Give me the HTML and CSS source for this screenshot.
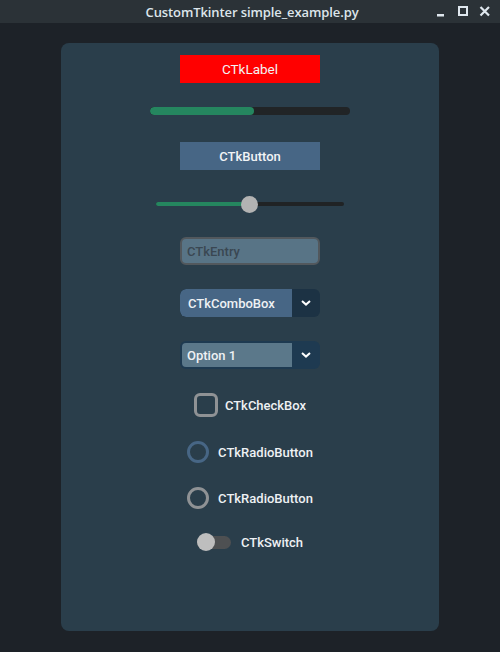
FILE: index.html
```html
<!DOCTYPE html>
<html>
<head>
<meta charset="utf-8">
<link rel="stylesheet" href="styles.css">
</head>
<body>
<div class="window">
  <div class="titlebar">
    <div class="title">CustomTkinter simple_example.py</div>
    <div class="controls">
      <svg class="ctl" width="12" height="12" viewBox="0 0 12 12"><rect x="2" y="8" width="7" height="2.5" fill="#dfe7ee"/></svg>
      <svg class="ctl" width="12" height="12" viewBox="0 0 12 12"><rect x="2" y="1" width="8" height="8" fill="none" stroke="#dfe7ee" stroke-width="2"/></svg>
      <svg class="ctl" width="12" height="12" viewBox="0 0 12 12"><path d="M1.5 1 L10 9.5 M10 1 L1.5 9.5" stroke="#dfe7ee" stroke-width="2.2"/></svg>
    </div>
  </div>
  <div class="content">
    <div class="frame">
      <div class="label">CTkLabel</div>
      <div class="progress"><div class="progress-fill"></div></div>
      <div class="button">CTkButton</div>
      <div class="slider">
        <div class="slider-track"><div class="slider-fill"></div></div>
        <div class="slider-knob"></div>
      </div>
      <div class="entry">CTkEntry</div>
      <div class="combo">
        <div class="combo-text">CTkComboBox</div>
        <div class="combo-btn">
          <svg width="10" height="6" viewBox="0 0 10 6"><path d="M1 1 L5 4.6 L9 1" fill="none" stroke="#ffffff" stroke-width="2"/></svg>
        </div>
      </div>
      <div class="option">
        <div class="option-text">Option 1</div>
        <div class="option-btn">
          <svg width="10" height="6" viewBox="0 0 10 6"><path d="M1 1 L5 4.6 L9 1" fill="none" stroke="#ffffff" stroke-width="2"/></svg>
        </div>
      </div>
      <div class="row check-row">
        <div class="checkbox"></div>
        <span class="row-text">CTkCheckBox</span>
      </div>
      <div class="row radio-row">
        <div class="radio radio-blue"></div>
        <span class="row-text">CTkRadioButton</span>
      </div>
      <div class="row radio-row">
        <div class="radio radio-gray"></div>
        <span class="row-text">CTkRadioButton</span>
      </div>
      <div class="row switch-row">
        <div class="switch"><div class="switch-knob"></div></div>
        <span class="row-text">CTkSwitch</span>
      </div>
    </div>
  </div>
</div>
</body>
</html>
```
FILE: styles.css
```css
html, body {
  margin: 0;
  padding: 0;
  width: 500px;
  height: 652px;
  overflow: hidden;
  background: #1d2228;
}
.window {
  display: flex;
  flex-direction: column;
  width: 500px;
  height: 652px;
}
.titlebar {
  height: 23px;
  background: #2b3237;
  display: flex;
  align-items: center;
  justify-content: center;
  position: relative;
  flex: none;
}
.title {
  font-family: "Open Sans", "DejaVu Sans", sans-serif;
  font-weight: 600;
  font-size: 13px;
  color: #dde5eb;
  margin-left: 4px;
  letter-spacing: -0.1px;
}
.controls {
  position: absolute;
  right: 9px;
  top: 6px;
  display: flex;
  gap: 10px;
}
.ctl { display: block; }
.content {
  flex: 1;
  padding: 20px 61px 21px 61px;
}
.frame {
  height: 588px;
  background: #2a3e4b;
  border-radius: 8px;
  display: flex;
  flex-direction: column;
  align-items: center;
  padding-top: 12px;
  box-sizing: border-box;
  font-family: Roboto, "Liberation Sans", sans-serif;
  font-weight: 500;
  font-size: 13px;
  color: #eef1f4;
}
.label {
  width: 140px;
  height: 28px;
  background: #ff0000;
  color: #f4f4f4;
  display: flex;
  align-items: center;
  justify-content: center;
  font-weight: 400;
  font-size: 13.5px;
}
.progress {
  margin-top: 24px;
  width: 200px;
  height: 8px;
  border-radius: 4px;
  background: #212426;
  overflow: hidden;
}
.progress-fill {
  width: 104px;
  height: 100%;
  background: #25865f;
  border-radius: 4px;
}
.button {
  margin-top: 27px;
  width: 140px;
  height: 28px;
  background: #476685;
  display: flex;
  align-items: center;
  justify-content: center;
  color: #f2f4f6;
}
.slider {
  margin-top: 25px;
  width: 188px;
  height: 18px;
  position: relative;
  display: flex;
  align-items: center;
}
.slider-track {
  width: 188px;
  height: 4px;
  border-radius: 2px;
  background: #202325;
  overflow: hidden;
}
.slider-fill {
  width: 94px;
  height: 100%;
  background: #25865f;
}
.slider-knob {
  position: absolute;
  left: 85px;
  top: 1px;
  width: 17px;
  height: 17px;
  border-radius: 50%;
  background: #b3b3b3;
}
.entry {
  margin-top: 24px;
  width: 140px;
  height: 28px;
  box-sizing: border-box;
  border: 2px solid #52585d;
  border-radius: 6px;
  background: #587486;
  color: #3a4752;
  display: flex;
  align-items: center;
  padding-left: 5px;
}
.combo {
  margin-top: 24px;
  width: 140px;
  height: 28px;
  border-radius: 6px;
  background: #1c3244;
  display: flex;
  overflow: hidden;
}
.combo-text {
  width: 112px;
  background: #476685;
  display: flex;
  align-items: center;
  padding-left: 8px;
  box-sizing: border-box;
  border-radius: 6px 0 0 6px;
}
.combo-btn, .option-btn {
  flex: 1;
  display: flex;
  align-items: center;
  justify-content: center;
}
.combo-btn svg, .option-btn svg { display: block; }
.option {
  margin-top: 24px;
  width: 140px;
  height: 28px;
  border-radius: 6px;
  background: #1e3a51;
  display: flex;
  box-sizing: border-box;
  padding: 2px 0 2px 2px;
}
.option-text {
  width: 110px;
  background: #5b788a;
  display: flex;
  align-items: center;
  padding-left: 5px;
  box-sizing: border-box;
  border-radius: 4px 0 0 4px;
}
.row {
  margin-top: 24px;
  display: flex;
  align-items: center;
}
.check-row { height: 24px; gap: 7px; }
.checkbox {
  width: 24px;
  height: 24px;
  box-sizing: border-box;
  border: 3px solid #8f9295;
  border-radius: 6px;
}
.radio-row { height: 22px; gap: 9px; }
.radio {
  width: 22px;
  height: 22px;
  box-sizing: border-box;
  border-radius: 50%;
  border: 3px solid #8f9295;
}
.radio-blue { border-color: #476685; }
.switch-row { height: 18px; gap: 10px; }
.switch {
  width: 34px;
  height: 18px;
  position: relative;
  display: flex;
  align-items: center;
}
.switch::before {
  content: "";
  display: block;
  width: 34px;
  height: 13px;
  border-radius: 7px;
  background: #4e5052;
}
.switch-knob {
  position: absolute;
  left: 0;
  top: 0;
  width: 18px;
  height: 18px;
  border-radius: 50%;
  background: #bebebe;
}
.row-text { color: #eef1f4; }
```
